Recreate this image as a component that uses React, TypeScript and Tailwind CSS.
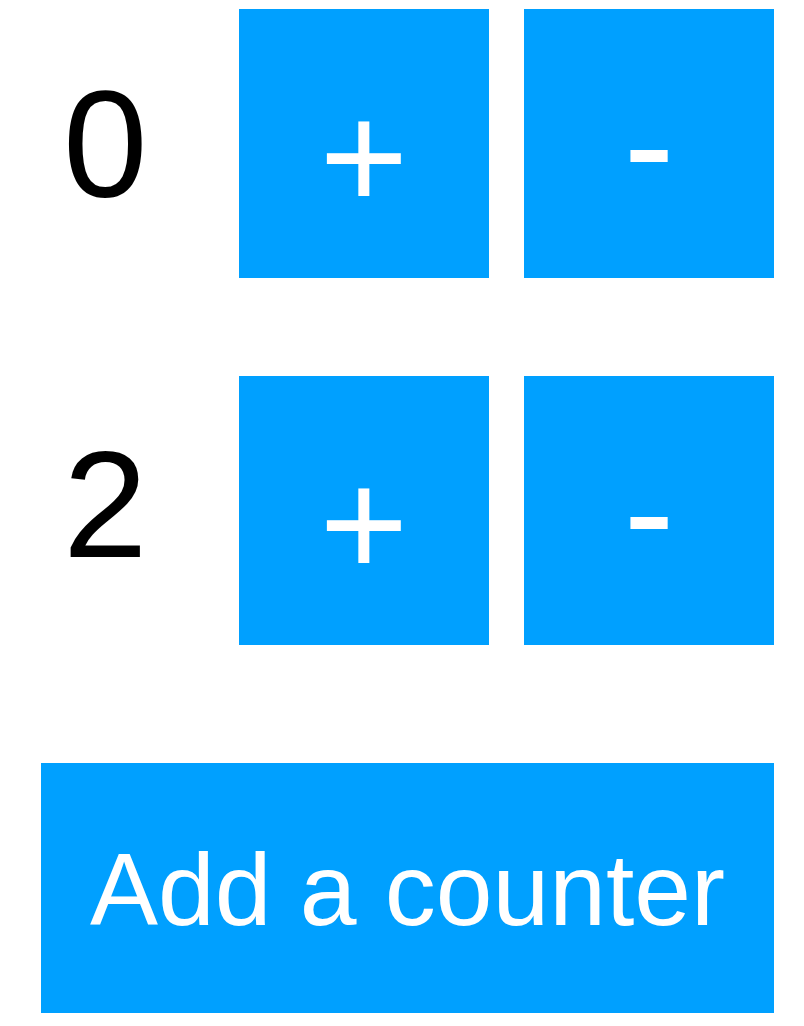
import { useState } from "react";

const buttonCls = "bg-[#00a0ff] text-white cursor-pointer";
const stepCls = "h-[269px] text-[152px] leading-none";

function Steppers({ id, value, onChange }: { id: string; value: number; onChange: (v: number) => void }) {
  return (
    <div className="grid grid-cols-2 gap-[35px]">
      <button type="button" aria-label="Increment" aria-controls={id} onClick={() => onChange(value + 1)}
        className={`${buttonCls} ${stepCls} pt-6`}>
        +
      </button>
      <button type="button" aria-label="Decrement" aria-controls={id} onClick={() => onChange(value - 1)}
        className={`${buttonCls} ${stepCls}`}>
        -
      </button>
    </div>
  );
}

export default function App() {
  const [counters, setCounters] = useState([0, 2]);

  const update = (i: number, v: number) => setCounters(counters.map((c, j) => (j === i ? v : c)));

  return (
    <main className="bg-white pt-[9px] pr-[30px] pb-[13px] pl-[41px] font-['Liberation_Sans',Arial,sans-serif] text-black">
      <div className="flex">
        <div className="flex w-[198px] shrink-0 flex-col gap-[190px] pt-[50px] pl-[22px]">
          {counters.map((value, i) => (
            <output key={i} id={`counter-${i}`} className="text-[152px] leading-[170px]">{value}</output>
          ))}
        </div>
        <div className="flex grow flex-col gap-[98px]">
          {counters.map((value, i) => (
            <Steppers key={i} id={`counter-${i}`} value={value} onChange={(v) => update(i, v)} />
          ))}
        </div>
      </div>
      <button type="button" onClick={() => setCounters([...counters, 0])}
        className={`${buttonCls} mt-[118px] h-[250px] w-full pt-1 text-[102px] leading-none whitespace-nowrap`}>
        Add a counter
      </button>
    </main>
  );
}
